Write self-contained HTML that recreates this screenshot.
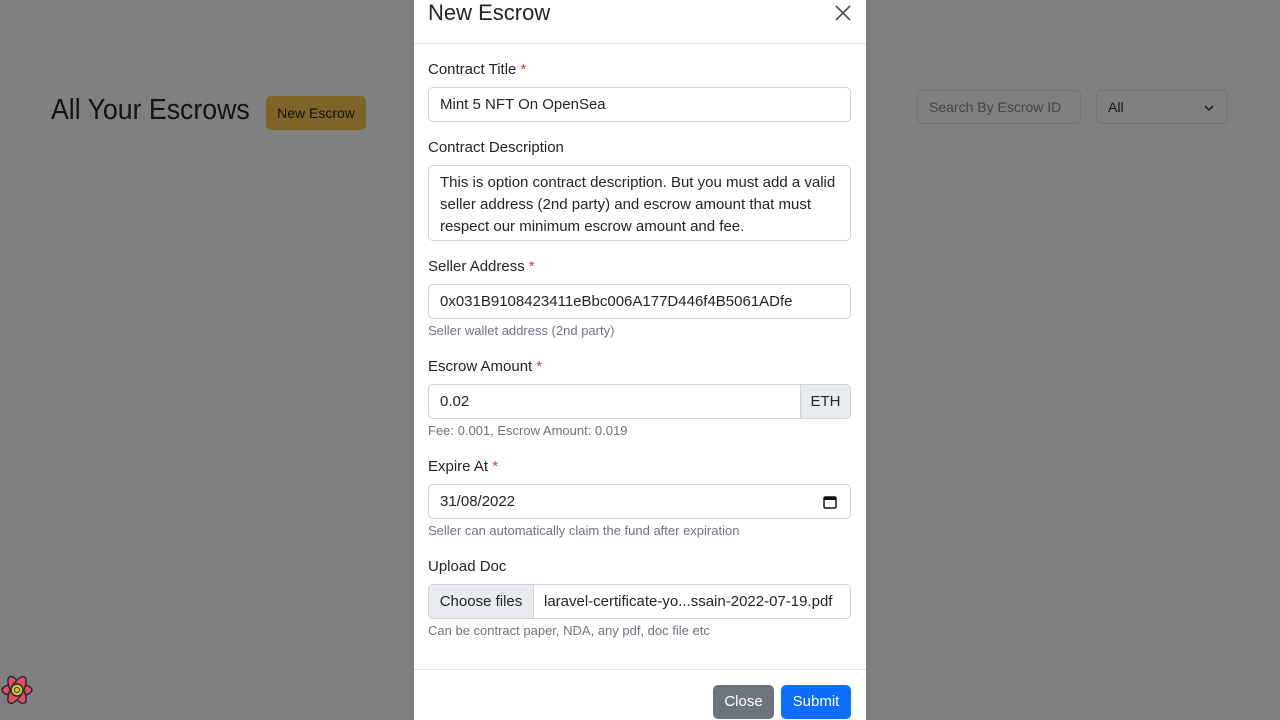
<!DOCTYPE html>
<html><head><style>
*{box-sizing:border-box}
body{margin:0;width:1280px;height:720px;overflow:hidden;background:#808080;font-family:"Liberation Sans",sans-serif;color:#212529;position:relative}
.h1{position:absolute;left:51px;top:94px;font-size:29px;color:#141414;transform:scaleX(0.92);transform-origin:left top;white-space:nowrap}
.nb{position:absolute;left:266px;top:96px;width:100px;height:34px;background:#7f6428;border-radius:5px;font-size:14px;line-height:34px;text-align:center;color:#111}
.srch{position:absolute;left:917px;top:90px;width:164px;height:34px;border:1px solid #737373;border-radius:5px;font-size:14px;color:#444;padding:8px 11px;background:#808080}
.sel{position:absolute;left:1096px;top:90px;width:132px;height:34px;border:1px solid #737373;border-radius:5px;font-size:14px;color:#141414;padding:8px 11px;background:#808080}
.modal{position:absolute;left:414px;top:0;width:452px;height:720px;background:#fff}
.hd{height:44px;border-bottom:1px solid #dee2e6;position:relative}
.hd .t{position:absolute;left:14px;top:0px;font-size:22px}
.x{position:absolute;right:14px;top:4px}
.lbl{position:absolute;left:14px;font-size:15px}
.lbl b{color:#dc3545;font-weight:normal}
.in{position:absolute;left:14px;width:423px;height:35px;border:1px solid #ced4da;border-radius:5px;font-size:15px;padding:8px 11px;line-height:17px}
.help{position:absolute;left:14px;font-size:13px;color:#6c757d}
.ft{position:absolute;left:0;top:669px;width:452px;border-top:1px solid #dee2e6}
.btn{position:absolute;top:685px;height:34px;border-radius:5px;color:#fff;font-size:15px;line-height:34px;text-align:center}
</style></head><body>
<div class="h1">All Your Escrows</div>
<div class="nb">New Escrow</div>
<div class="srch">Search By Escrow ID</div>
<div class="sel">All<svg style="position:absolute;right:12px;top:12px" width="12" height="10" viewBox="0 0 12 10"><path d="M2 3l4 4 4-4" stroke="#222" stroke-width="1.6" fill="none"/></svg></div>
<svg style="position:absolute;left:0;top:673px" width="34" height="34" viewBox="0 0 34 34"><g fill="#e84c5b" stroke="#1f2d3d" stroke-width="1.5"><ellipse cx="17" cy="17" rx="15" ry="6"/><ellipse cx="17" cy="17" rx="15" ry="6" transform="rotate(60 17 17)"/><ellipse cx="17" cy="17" rx="15" ry="6" transform="rotate(120 17 17)"/></g><circle cx="17" cy="17" r="6" fill="#d8c32a" stroke="#1f2d3d" stroke-width="1.5"/><circle cx="17" cy="17" r="2.5" fill="none" stroke="#1f2d3d"/></svg>
<div class="modal">
<div class="hd"><div class="t">New Escrow</div><svg class="x" width="18" height="18" viewBox="0 0 18 18"><path d="M2 2l14 14M16 2L2 16" stroke="#555" stroke-width="1.8"/></svg></div>
<div class="lbl" style="top:61px">Contract Title <b>*</b></div>
<div class="in" style="top:87px">Mint 5 NFT On OpenSea</div>
<div class="lbl" style="top:139px">Contract Description</div>
<div class="in" style="top:165px;height:76px;line-height:22px;padding:6px 11px">This is option contract description. But you must add a valid seller address (2nd party) and escrow amount that must respect our minimum escrow amount and fee.</div>
<div class="lbl" style="top:258px">Seller Address <b>*</b></div>
<div class="in" style="top:284px">0x031B9108423411eBbc006A177D446f4B5061ADfe</div>
<div class="help" style="top:323px">Seller wallet address (2nd party)</div>
<div class="lbl" style="top:358px">Escrow Amount <b>*</b></div>
<div class="in" style="top:384px">0.02<div style="position:absolute;right:-1px;top:-1px;width:51px;height:35px;background:#e9ecef;border:1px solid #ced4da;border-radius:0 5px 5px 0;text-align:center;line-height:33px">ETH</div></div>
<div class="help" style="top:423px">Fee: 0.001, Escrow Amount: 0.019</div>
<div class="lbl" style="top:458px">Expire At <b>*</b></div>
<div class="in" style="top:484px">31/08/2022<svg style="position:absolute;right:13px;top:10px" width="14" height="14" viewBox="0 0 14 14"><rect x="1" y="2" width="12" height="11" rx="1.5" fill="none" stroke="#111" stroke-width="1.5"/><rect x="1" y="2" width="12" height="3" fill="#111"/></svg></div>
<div class="help" style="top:523px">Seller can automatically claim the fund after expiration</div>
<div class="lbl" style="top:558px">Upload Doc</div>
<div class="in" style="top:584px;padding-left:115px">laravel-certificate-yo...ssain-2022-07-19.pdf<div style="position:absolute;left:-1px;top:-1px;width:106px;height:35px;background:#e9ecef;border:1px solid #ced4da;border-radius:5px 0 0 5px;text-align:center;line-height:33px">Choose files</div></div>
<div class="help" style="top:623px">Can be contract paper, NDA, any pdf, doc file etc</div>
<div class="ft"></div>
<div class="btn" style="left:299px;width:61px;background:#6c757d">Close</div>
<div class="btn" style="left:367px;width:70px;background:#0d6efd">Submit</div>
</div>
</body></html>
